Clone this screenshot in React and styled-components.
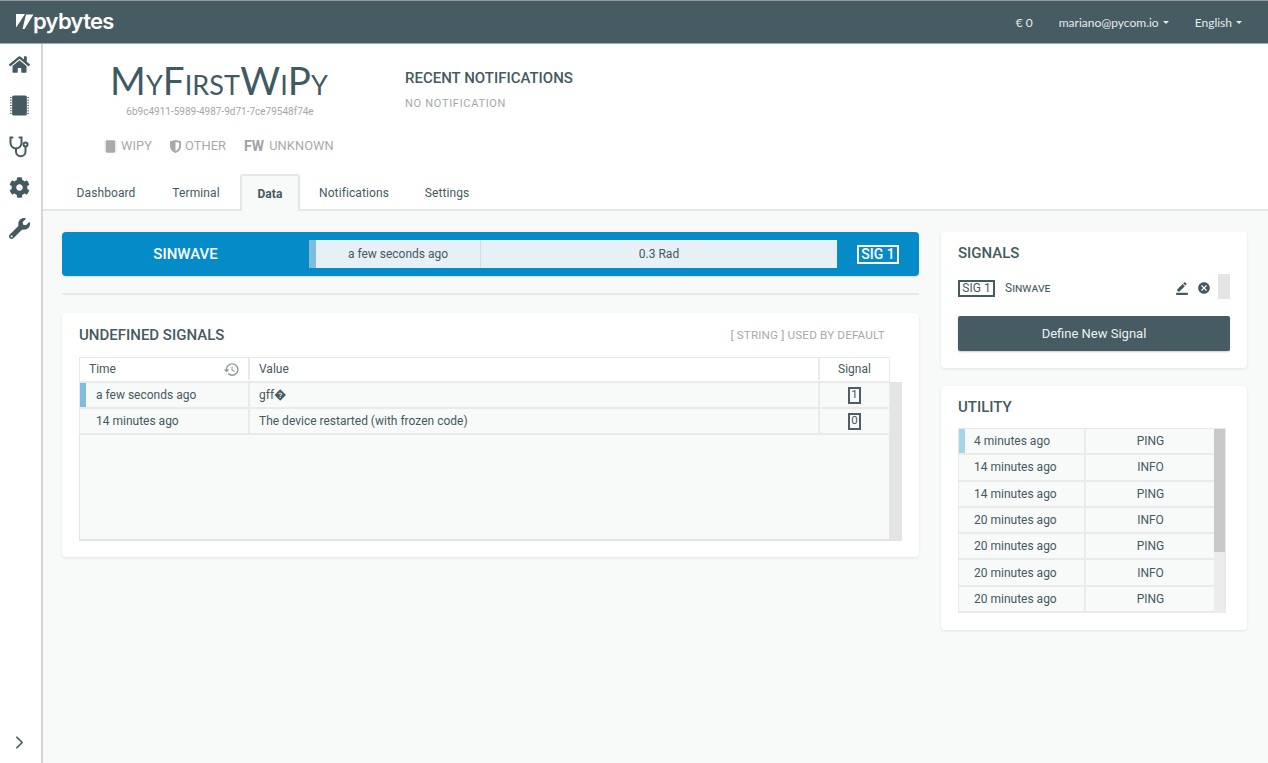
import React from "react";
import styled, { createGlobalStyle } from "styled-components";
import { FaHome, FaCog, FaWrench } from "react-icons/fa";
import { MdHistory, MdBorderColor, MdCancel } from "react-icons/md";
import { LuChevronRight } from "react-icons/lu";

const Global = createGlobalStyle`
  html, body { margin: 0; padding: 0; background: #f8f9f9; }
  body { font-family: Roboto, "Liberation Sans", sans-serif; color: #455a60; overflow: hidden; }
  * { box-sizing: border-box; }
`;
const Page = styled.div`width: 1268px; height: 763px; display: flex; flex-direction: column; overflow: hidden;`;
const TopBar = styled.header`
  height: 44px; flex: none; background: #465b62; border-top: 1px solid #9a9a9a; border-bottom: 1px solid #9fa8ab;
  display: flex; align-items: center; padding: 0 26px 0 15px; color: #e6ecee; font-family: Lato, sans-serif; font-size: 12px;
`;
const Logo = styled.div`display: flex; align-items: center; color: #fff; flex: 1; margin-top: -2px;`;
const LogoText = styled.span`font-family: Inter, sans-serif; font-weight: 600; font-size: 22px; letter-spacing: -0.7px; margin-left: -1px; line-height: 1;`;
const Euro = styled.span`margin-right: 26px;`;
const NavMenu = styled.span`
  margin-left: ${(p) => p.$gap}px; display: inline-flex; align-items: center;
  &::after { content: ""; margin-left: 4px; margin-top: 1px; border-top: 3px solid #e6ecee; border-left: 3px solid transparent; border-right: 3px solid transparent; }
`;
const Body = styled.div`flex: 1; display: flex; min-height: 0;`;
const Sidebar = styled.nav`
  width: 43px; flex: none; background: #fff; border-right: 2px solid #d4d7d8; display: flex; flex-direction: column;
  align-items: center; padding: 0 3px 0 0; color: #455a60;
`;
const SideIcon = styled.div`height: 41px; width: 30px; display: flex; align-items: center; justify-content: center; font-size: 21px; flex: none;`;
const SideFoot = styled.div`margin-top: auto; height: 41px; display: flex; align-items: center; font-size: 21px;`;
const Content = styled.main`flex: 1; min-width: 0; display: flex; flex-direction: column;`;
const Head = styled.section`background: #fff; height: 167px; flex: none; border-bottom: 2px solid #e5e7e7; display: flex; flex-direction: column;`;
const HeadTop = styled.div`display: flex; height: 131px;`;
const Identity = styled.div`width: 362px; flex: none; display: flex; flex-direction: column; padding-left: 59px;`;
const Title = styled.h1`
  margin: 13px 0 0; width: 234px; font-family: Lato, sans-serif; font-weight: 400; font-variant: small-caps;
  font-size: 38.5px; line-height: 46px; color: #3f5a63; white-space: nowrap; letter-spacing: 0.1px; display: flex; justify-content: center;
`;
const Uuid = styled.div`width: 236px; text-align: center; font-size: 10px; color: #a3a7a9; margin-top: 2px; line-height: 13px; white-space: nowrap;`;
const Meta = styled.div`display: flex; align-items: center; margin: 19px 0 0 2px; font-size: 12.8px; color: #a7aaac; gap: 18px; line-height: 18px; letter-spacing: .1px;`;
const MetaItem = styled.span`display: inline-flex; align-items: center; gap: 4px;`;
const Fw = styled.b`font-weight: 700; font-size: 14px; color: #9fa3a5; margin-right: 1px;`;
const Notes = styled.div`padding-top: 25px;`;
const NotesTitle = styled.h2`margin: 0; font-size: 15px; font-weight: 500; line-height: 18px; color: #455a60;`;
const NotesText = styled.div`margin-top: 10px; font-size: 11px; color: #a3a7a9; letter-spacing: .7px; line-height: 13px;`;
const Tabs = styled.div`display: flex; height: 36px; padding-left: 17px; align-items: flex-end; margin-bottom: -2px;`;
const Tab = styled.div`
  height: 37px; display: flex; align-items: center; justify-content: center; font-size: 12px; letter-spacing: .1px; width: ${(p) => p.$w}px;
  ${(p) => p.$active ? `font-weight: 700; background: #f8f9f9; border: 2px solid #e5e7e7; border-bottom: none; border-radius: 3px 3px 0 0;` : ""}
`;
const Main = styled.div`flex: 1; display: flex; gap: 22px; padding: 21px 21px 0 19px; align-items: flex-start;`;
const Left = styled.div`width: 857px; flex: none; display: flex; flex-direction: column;`;
const Right = styled.div`width: 306px; flex: none; display: flex; flex-direction: column; gap: 18px;`;
const Banner = styled.div`height: 44px; background: #058bc7; border-radius: 4px; display: flex; align-items: center; padding: 0 20px 0 0; box-shadow: 0 1px 2px rgba(0,0,0,.12);`;
const BannerName = styled.div`width: 247px; text-align: center; color: #fff; font-size: 15px; font-weight: 500; flex: none;`;
const BannerRow = styled.div`flex: 1; height: 28px; display: flex; background: #e6f0f6; font-size: 12px; color: #455a60;`;
const RowFlag = styled.div`width: 7px; background: #7dbde0; flex: none;`;
const BannerTime = styled.div`width: 165px; display: flex; align-items: center; justify-content: center; border-right: 1px solid #cfdde5;`;
const BannerVal = styled.div`flex: 1; display: flex; align-items: center; justify-content: center;`;
const SigBadge = styled.div`
  margin-left: 20px; width: 42px; height: 19px; border: 2px solid #fff; color: #fff; font-weight: 500; font-size: 14px;
  display: flex; align-items: center; justify-content: center; white-space: nowrap;
`;
const Rule = styled.hr`border: none; border-top: 2px solid #e7e9e9; margin: 17px 0 18px; height: 0;`;
const Card = styled.section`background: #fff; border-radius: 4px; box-shadow: 0 1px 3px rgba(0,0,0,.09); padding: ${(p) => p.$pad};`;
const CardHead = styled.div`display: flex; align-items: center; justify-content: space-between; padding-right: 17px; height: 22px;`;
const CardTitle = styled.h3`margin: 0; font-size: 15px; font-weight: 500; color: #455a60; line-height: 22px;`;
const CardNote = styled.span`font-size: 11.7px; color: #a7aaac; letter-spacing: .15px;`;
const TableWrap = styled.div`width: 823px; margin-top: 11px; position: relative;`;
const GridRow = styled.div`
  display: grid; grid-template-columns: 170px 570px 70px; width: 811px; height: 26px; border-bottom: 2px solid #e9ebeb; font-size: 12px;
  background: #f8f9f9; border-left: 1px solid #e9ebeb; border-right: 1px solid #e9ebeb;
`;
const HeadRow = styled(GridRow)`background: #fff; border-top: 1px solid #e9ebeb; padding-bottom: 1px;`;
const Cell = styled.div`
  display: flex; align-items: center; justify-content: ${(p) => p.$center ? "center" : "space-between"}; position: relative;
  padding: ${(p) => p.$center ? "0 1px 0 0" : `0 8px 0 ${p.$pl || 9}px`}; border-right: ${(p) => p.$last ? "none" : "2px solid #e9ebeb"}; color: #455a60; white-space: nowrap;
`;
const HeadIcon = styled(MdHistory)`font-size: 17px; color: #8a989c;`;
const Flag = styled.span`position: absolute; left: 0; top: 0; bottom: 0; width: 6px; background: ${(p) => p.$c};`;
const ValueBadge = styled.span`width: 13px; height: 17px; border: 2px solid #4a5f66; display: flex; align-items: center; justify-content: center; font-size: 11.5px; line-height: 1;`;
const TableEmpty = styled.div`width: 811px; height: 106px; background: #f8f9f9; border: 1px solid #e3e5e5; border-top: none; border-bottom: 2px solid #e3e5e5;`;
const Track = styled.div`position: absolute; right: 0; top: 25px; bottom: 0; width: 12px; background: #e4e4e4;`;
const SigRow = styled.div`display: flex; align-items: center; margin-top: 10px; height: 28px;`;
const SigOutline = styled.div`width: 37px; height: 17px; border: 2px solid #455a60; font-size: 12px; display: flex; align-items: center; justify-content: center; white-space: nowrap; color: #455a60;`;
const SigName = styled.span`margin-left: 10px; font-size: 12px; font-variant: small-caps; flex: 1;`;
const EditIcon = styled(MdBorderColor)`font-size: 14px; margin-right: 8px;`;
const RemoveIcon = styled(MdCancel)`font-size: 14px; margin-right: 7px;`;
const Stub = styled.div`width: 12px; height: 25px; background: #e4e4e4; align-self: flex-start;`;
const Button = styled.button`
  display: block; width: 100%; height: 35px; margin-top: 14px; border: none; border-radius: 2px; background: #465b62; color: #eef2f3;
  font-family: inherit; font-size: 13px; box-shadow: 0 1px 2px rgba(0,0,0,.2);
`;
const UtilTable = styled.div`margin-top: 10px; width: 268px; position: relative; border: 1px solid #e7e9e9; border-bottom: none;`;
const UtilRow = styled.div`
  display: grid; grid-template-columns: 127px 129px; height: 26.3px; background: #f8f9f9; border-bottom: 2px solid #e9ebeb; font-size: 12px; width: 257px; color: #455a60;
`;
const UtilTime = styled.div`display: flex; align-items: center; padding-left: 15px; position: relative; border-right: 2px solid #e9ebeb; white-space: nowrap;`;
const UtilKind = styled.div`display: flex; align-items: center; justify-content: center;`;
const UtilTrack = styled.div`position: absolute; right: 0; top: 0; bottom: 0; width: 11px; background: #ececec;`;
const UtilThumb = styled.div`height: 123px; background: #c9c9c9;`;

const Mark = () => (
  <svg width="19" height="17" viewBox="0 0 19 17" fill="#fff">
    <path d="M1 1h9L4.500 9.500 1 14.500z" />
    <path d="M11 1.500h7.500L9.500 16H7.500z" />
  </svg>
);
const Chip = ({ size, color }) => (
  <svg width={size} height={size} viewBox="0 0 20 20" fill={color}>
    <rect x="3" y="0.5" width="14" height="19" rx="1.5" />
    {[2, 4.5, 7, 9.5, 12, 14.5, 17].map((y) => (
      <g key={y}><rect x="1" y={y} width="1.500" height="1" /><rect x="17.500" y={y} width="1.500" height="1" /></g>
    ))}
  </svg>
);
const Shield = () => (
  <svg width="11" height="13" viewBox="0 0 11 13" fill="#a7aaac">
    <path d="M0 1.200 5.500 0 11 1.200V6c0 3.500-2.500 6-5.500 7C2.500 12 0 9.500 0 6z M5.500 2v9c2-.9 3.600-2.700 3.600-5V2.700z" fillRule="evenodd" />
  </svg>
);
const Stethoscope = () => (
  <svg width="30" height="30" viewBox="0 0 30 30" fill="none" stroke="#455a60" strokeWidth="2" strokeLinecap="round">
    <path d="M8.500 5.500H6.500V11a5.500 5.500 0 0 0 11 0V5.500H15.500" />
    <path d="M12 16.500V19.500a4.500 4.500 0 0 0 9.500 0V15" />
    <circle cx="21.500" cy="12.500" r="2" />
  </svg>
);

const undefinedRows = [
  { time: "a few seconds ago", value: "gff\uFFFD", sig: "1", flag: true },
  { time: "14 minutes ago", value: "The device restarted (with frozen code)", sig: "0" },
];
const utilRows = [
  ["4 minutes ago", "PING"], ["14 minutes ago", "INFO"], ["14 minutes ago", "PING"], ["20 minutes ago", "INFO"],
  ["20 minutes ago", "PING"], ["20 minutes ago", "INFO"], ["20 minutes ago", "PING"],
];

export default function App() {
  return (
    <Page>
      <Global />
      <TopBar>
        <Logo><Mark /><LogoText>pybytes</LogoText></Logo>
        <Euro>€ 0</Euro>
        <NavMenu $gap={0}>mariano@pycom.io</NavMenu>
        <NavMenu $gap={26}>English</NavMenu>
      </TopBar>
      <Body>
        <Sidebar>
          <SideIcon><FaHome /></SideIcon>
          <SideIcon><Chip size={21} color="#455a60" /></SideIcon>
          <SideIcon><Stethoscope /></SideIcon>
          <SideIcon><FaCog /></SideIcon>
          <SideIcon><FaWrench /></SideIcon>
          <SideFoot><LuChevronRight /></SideFoot>
        </Sidebar>
        <Content>
          <Head>
            <HeadTop>
              <Identity>
                <Title>MyFirstWiPy</Title>
                <Uuid>6b9c4911-5989-4987-9d71-7ce79548f74e</Uuid>
                <Meta>
                  <MetaItem><Chip size={13} color="#a7aaac" />WIPY</MetaItem>
                  <MetaItem><Shield />OTHER</MetaItem>
                  <MetaItem><Fw>FW</Fw>UNKNOWN</MetaItem>
                </Meta>
              </Identity>
              <Notes>
                <NotesTitle>RECENT NOTIFICATIONS</NotesTitle>
                <NotesText>NO NOTIFICATION</NotesText>
              </Notes>
            </HeadTop>
            <Tabs>
              <Tab $w={92}>Dashboard</Tab>
              <Tab $w={88}>Terminal</Tab>
              <Tab $w={60} $active>Data</Tab>
              <Tab $w={108}>Notifications</Tab>
              <Tab $w={78}>Settings</Tab>
            </Tabs>
          </Head>
          <Main>
            <Left>
              <Banner>
                <BannerName>SINWAVE</BannerName>
                <BannerRow>
                  <RowFlag />
                  <BannerTime>a few seconds ago</BannerTime>
                  <BannerVal>0.3 Rad</BannerVal>
                </BannerRow>
                <SigBadge>SIG 1</SigBadge>
              </Banner>
              <Rule />
              <Card $pad="11px 17px 16px">
                <CardHead>
                  <CardTitle>UNDEFINED SIGNALS</CardTitle>
                  <CardNote>[ STRING ] USED BY DEFAULT</CardNote>
                </CardHead>
                <TableWrap>
                  <HeadRow>
                    <Cell>Time<HeadIcon /></Cell>
                    <Cell>Value</Cell>
                    <Cell $center $last>Signal</Cell>
                  </HeadRow>
                  {undefinedRows.map((r) => (
                    <GridRow key={r.time}>
                      <Cell $pl={16}>{r.flag && <Flag $c="#7dbde0" />}{r.time}</Cell>
                      <Cell>{r.value}</Cell>
                      <Cell $center $last><ValueBadge>{r.sig}</ValueBadge></Cell>
                    </GridRow>
                  ))}
                  <TableEmpty />
                  <Track />
                </TableWrap>
              </Card>
            </Left>
            <Right>
              <Card $pad="10px 17px 17px">
                <CardTitle>SIGNALS</CardTitle>
                <SigRow>
                  <SigOutline>SIG 1</SigOutline>
                  <SigName>Sinwave</SigName>
                  <EditIcon />
                  <RemoveIcon />
                  <Stub />
                </SigRow>
                <Button>Define New Signal</Button>
              </Card>
              <Card $pad="10px 21px 17px 17px">
                <CardTitle>UTILITY</CardTitle>
                <UtilTable>
                  {utilRows.map(([t, k], i) => (
                    <UtilRow key={i}>
                      <UtilTime>{i === 0 && <Flag $c="#a6d3e8" />}{t}</UtilTime>
                      <UtilKind>{k}</UtilKind>
                    </UtilRow>
                  ))}
                  <UtilTrack><UtilThumb /></UtilTrack>
                </UtilTable>
              </Card>
            </Right>
          </Main>
        </Content>
      </Body>
    </Page>
  );
}
